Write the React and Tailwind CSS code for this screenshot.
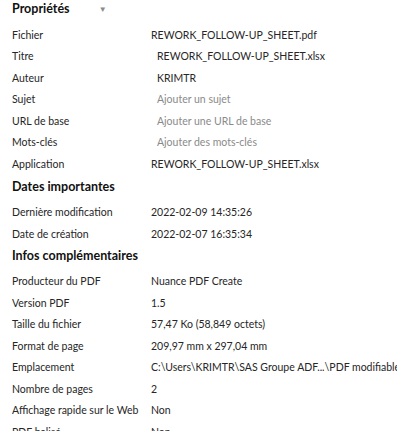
const general = [
  { label: 'Fichier', value: 'REWORK_FOLLOW-UP_SHEET.pdf' },
  { label: 'Titre', value: 'REWORK_FOLLOW-UP_SHEET.xlsx', field: true },
  { label: 'Auteur', value: 'KRIMTR', field: true },
  { label: 'Sujet', value: 'Ajouter un sujet', field: true, empty: true },
  { label: 'URL de base', value: 'Ajouter une URL de base', field: true, empty: true },
  { label: 'Mots-clés', value: 'Ajouter des mots-clés', field: true, empty: true },
  { label: 'Application', value: 'REWORK_FOLLOW-UP_SHEET.xlsx' },
];

const dates = [
  { label: 'Dernière modification', value: '2022-02-09 14:35:26' },
  { label: 'Date de création', value: '2022-02-07 16:35:34' },
];

const infos = [
  { label: 'Producteur du PDF', value: 'Nuance PDF Create' },
  { label: 'Version PDF', value: '1.5' },
  { label: 'Taille du fichier', value: '57,47 Ko (58,849 octets)' },
  { label: 'Format de page', value: '209,97 mm x 297,04 mm' },
  { label: 'Emplacement', value: 'C:\\Users\\KRIMTR\\SAS Groupe ADF...\\PDF modifiable\\' },
  { label: 'Nombre de pages', value: '2' },
  { label: 'Affichage rapide sur le Web', value: 'Non' },
  { label: 'PDF balisé', value: 'Non' },
];

function Row({ label, value, field, empty }) {
  return (
    <div className="flex h-[21.5px] items-center whitespace-nowrap">
      <div className="w-[139px] shrink-0 text-[#262626]">{label}</div>
      <div className={`${field ? 'pl-[6px]' : ''} ${empty ? 'text-[#8a8a8a]' : 'text-[#262626]'}`}>
        {value}
      </div>
    </div>
  );
}

function Section({ title, children, className }) {
  return (
    <div className={className}>
      <div className="h-[18px] flex items-center text-[12.5px] font-bold text-[#111]">{title}</div>
      {children}
    </div>
  );
}

export default function App() {
  return (
    <div
      className="w-[397px] h-[431px] overflow-hidden bg-white pl-3 pt-px text-[10.5px]"
      style={{ fontFamily: 'Lato, "Open Sans", sans-serif' }}
    >
      <div className="flex h-4 items-center">
        <span className="text-[12.5px] font-bold text-[#111]">Propriétés</span>
        <span className="ml-[29px] text-[8px] text-[#8a8a8a]">▼</span>
      </div>
      <div className="mt-[8px]">
        {general.map((r) => <Row key={r.label} {...r} />)}
      </div>

      <Section title="Dates importantes" className="mt-[3px]">
        <div className="mt-[6px]">
          {dates.map((r) => <Row key={r.label} {...r} />)}
        </div>
      </Section>

      <Section title="Infos complémentaires" className="mt-[2px]">
        <div className="mt-[6px]">
          {infos.map((r) => <Row key={r.label} {...r} />)}
        </div>
      </Section>
    </div>
  );
}
